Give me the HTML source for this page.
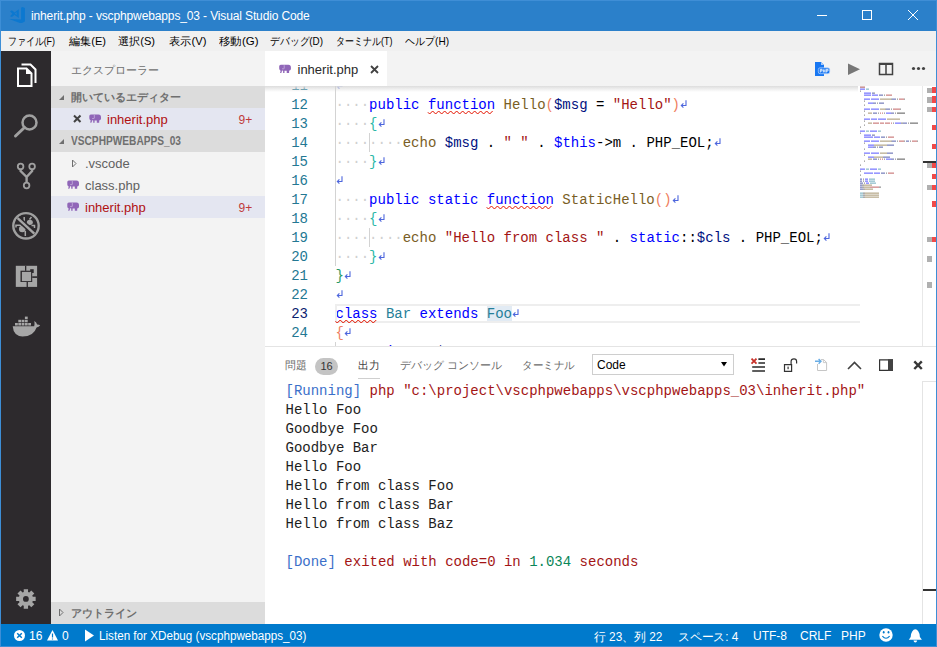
<!DOCTYPE html>
<html><head><meta charset="utf-8">
<style>
*{margin:0;padding:0;box-sizing:border-box}
html,body{width:937px;height:647px;overflow:hidden;background:#fff}
body{position:relative;font-family:"Liberation Sans",sans-serif;color:#333}
.a{position:absolute}
.nw{white-space:nowrap}
#title{left:0;top:0;width:937px;height:31px;background:#2b80ca;border-top:1px solid #3f8ed6}
#title .t{left:31px;top:8px;font-size:12px;color:#fff;letter-spacing:-0.13px;white-space:nowrap}
#menu{left:1px;top:31px;width:935px;height:20px;background:#f0f0f0}
#menu span{position:absolute;top:3px;font-size:11px;color:#000;white-space:nowrap}
#act{left:1px;top:51px;width:50px;height:573px;background:#2d2a2d}
#side{left:51px;top:51px;width:214px;height:573px;background:#f3f3f3;overflow:hidden}
#side .row{position:absolute;left:0;width:214px;height:22px;font-size:13px;color:#616161;white-space:nowrap}
#side .hdr{background:#dcdcdc;font-weight:bold;font-size:11px;color:#6f6f6f}
#side .sel{background:#e4e6f1}
#side .err{color:#b01011}
#tabs{left:265px;top:51px;width:671px;height:35px;background:#f3f3f3}
#tab{left:0;top:0;width:122px;height:35px;background:#fff}
#editor{left:265px;top:86px;width:671px;height:260px;background:#fff;overflow:hidden}
.cl{position:absolute;left:70.5px;height:19px;line-height:19px;font-family:"Liberation Mono",monospace;font-size:14px;white-space:pre;color:#000}
.ln{position:absolute;left:0;width:43px;text-align:right;height:19px;line-height:19px;font-family:"Liberation Mono",monospace;font-size:14px;color:#237893}
.ln.act{color:#0b216f}
.w{color:#d0d0d0}
.sq{color:#0000ff}
.hl{color:#267f99;background:#e2ebf4}
.eol{vertical-align:top}
#curline{left:70px;top:218px;width:525px;height:19px;border:2px solid #eeeeee;border-right:none}
#shadow{left:0;top:0;width:593px;height:6px;background:linear-gradient(#dddddd,rgba(255,255,255,0))}
#panel{left:265px;top:346px;width:671px;height:278px;background:#fff;border-top:1px solid #e4e4e4}
.pt{position:absolute;top:11px;font-size:11px;color:#6b6b6b;white-space:nowrap}
.ol{position:absolute;left:20.5px;height:19px;line-height:19px;font-family:"Liberation Mono",monospace;font-size:14px;white-space:pre}
#status{left:1px;top:624px;width:935px;height:22px;background:#007acc;color:#fff}
#status span{position:absolute;top:5px;font-size:12px;white-space:nowrap}
#bl{left:0;top:0;width:1px;height:647px;background:#3d8ed6}
#br{left:936px;top:0;width:1px;height:647px;background:#3d8ed6}
#bb{left:0;top:646px;width:937px;height:1px;background:#3d8ed6}
</style></head><body>
<div id="title" class="a"><div class="a t">inherit.php - vscphpwebapps_03 - Visual Studio Code</div></div>
<div id="menu" class="a">
<span class="f" style="left:7px;--w:47px">ファイル(F)</span>
<span class="f" style="left:67.5px;--w:37px">編集(E)</span>
<span class="f" style="left:117.3px;--w:37px">選択(S)</span>
<span class="f" style="left:167.6px;--w:37.5px">表示(V)</span>
<span class="f" style="left:218px;--w:39.5px">移動(G)</span>
<span class="f" style="left:269.2px;--w:53px">デバッグ(D)</span>
<span class="f" style="left:334.9px;--w:56.5px">ターミナル(T)</span>
<span class="f" style="left:404.2px;--w:44px">ヘルプ(H)</span>
</div>
<div id="act" class="a"></div>

<div id="side" class="a">
 <div class="a nw f" style="left:19.8px;top:12px;font-size:11px;color:#6f6f6f;--w:88px">エクスプローラー</div>
 <div class="row hdr" style="top:35px"><span class="a f" style="left:20.3px;top:4px;--w:110px">開いているエディター</span></div>
 <div class="row sel" style="top:57px"><span class="a err" style="left:56px;top:4px">inherit.php</span><span class="a err" style="left:187.5px;top:5px;font-size:12px;color:#c03a3a">9+</span></div>
 <div class="row hdr" style="top:79px"><span class="a f" style="left:20.3px;top:4px;font-size:12px;--w:110px">VSCPHPWEBAPPS_03</span></div>
 <div class="row" style="top:101px"><span class="a" style="left:34px;top:4px">.vscode</span></div>
 <div class="row" style="top:123px"><span class="a" style="left:34px;top:4px">class.php</span></div>
 <div class="row sel" style="top:145px"><span class="a err" style="left:34px;top:4px">inherit.php</span><span class="a err" style="left:187.5px;top:5px;font-size:12px;color:#c03a3a">9+</span></div>
 <div class="row hdr" style="top:551px"><span class="a f" style="left:19.5px;top:4px;--w:66px">アウトライン</span></div>
</div>

<div id="tabs" class="a">
 <div id="tab" class="a"><span class="a nw" style="left:32.5px;top:11px;font-size:13px;color:#2a2a2a">inherit.php</span></div>
</div>

<div id="editor" class="a">
<div class="cl" style="top:-9px"><svg class="eol" width="8.4" height="19" viewBox="0 0 8.4 19"><path d="M6 4.3V9.5H1.3M3.4 7.4L1.3 9.5L3.4 11.6" fill="none" stroke="#4d66dd" stroke-width="1.1"/></svg></div>
<div class="ln" style="top:-9px">11</div>
<div class="cl" style="top:10px"><span class="w">····</span><span style="color:#0000ff">public </span><span class="sq">function</span><span style="color:#0000ff"> </span><span style="color:#795e26">Hello</span><span style="color:#ef7f5f">(</span><span style="color:#001080">$msg</span><span style="color:#000000"> = </span><span style="color:#a31515">"Hello"</span><span style="color:#ef7f5f">)</span><svg class="eol" width="8.4" height="19" viewBox="0 0 8.4 19"><path d="M6 4.3V9.5H1.3M3.4 7.4L1.3 9.5L3.4 11.6" fill="none" stroke="#4d66dd" stroke-width="1.1"/></svg></div>
<div class="ln" style="top:10px">12</div>
<div class="cl" style="top:29px"><span class="w">····</span><span style="color:#2cb8a8">{</span><svg class="eol" width="8.4" height="19" viewBox="0 0 8.4 19"><path d="M6 4.3V9.5H1.3M3.4 7.4L1.3 9.5L3.4 11.6" fill="none" stroke="#4d66dd" stroke-width="1.1"/></svg></div>
<div class="ln" style="top:29px">13</div>
<div class="cl" style="top:48px"><span class="w">········</span><span style="color:#795e26">echo </span><span style="color:#001080">$msg</span><span style="color:#000000"> . </span><span style="color:#a31515">" "</span><span style="color:#000000"> . </span><span style="color:#0000ff">$this</span><span style="color:#000000">-&gt;m . PHP_EOL;</span><svg class="eol" width="8.4" height="19" viewBox="0 0 8.4 19"><path d="M6 4.3V9.5H1.3M3.4 7.4L1.3 9.5L3.4 11.6" fill="none" stroke="#4d66dd" stroke-width="1.1"/></svg></div>
<div class="ln" style="top:48px">14</div>
<div class="cl" style="top:67px"><span class="w">····</span><span style="color:#2cb8a8">}</span><svg class="eol" width="8.4" height="19" viewBox="0 0 8.4 19"><path d="M6 4.3V9.5H1.3M3.4 7.4L1.3 9.5L3.4 11.6" fill="none" stroke="#4d66dd" stroke-width="1.1"/></svg></div>
<div class="ln" style="top:67px">15</div>
<div class="cl" style="top:86px"><svg class="eol" width="8.4" height="19" viewBox="0 0 8.4 19"><path d="M6 4.3V9.5H1.3M3.4 7.4L1.3 9.5L3.4 11.6" fill="none" stroke="#4d66dd" stroke-width="1.1"/></svg></div>
<div class="ln" style="top:86px">16</div>
<div class="cl" style="top:105px"><span class="w">····</span><span style="color:#0000ff">public static </span><span class="sq">function</span><span style="color:#0000ff"> </span><span style="color:#795e26">StaticHello</span><span style="color:#ef7f5f">()</span><svg class="eol" width="8.4" height="19" viewBox="0 0 8.4 19"><path d="M6 4.3V9.5H1.3M3.4 7.4L1.3 9.5L3.4 11.6" fill="none" stroke="#4d66dd" stroke-width="1.1"/></svg></div>
<div class="ln" style="top:105px">17</div>
<div class="cl" style="top:124px"><span class="w">····</span><span style="color:#2cb8a8">{</span><svg class="eol" width="8.4" height="19" viewBox="0 0 8.4 19"><path d="M6 4.3V9.5H1.3M3.4 7.4L1.3 9.5L3.4 11.6" fill="none" stroke="#4d66dd" stroke-width="1.1"/></svg></div>
<div class="ln" style="top:124px">18</div>
<div class="cl" style="top:143px"><span class="w">········</span><span style="color:#795e26">echo </span><span style="color:#a31515">"Hello from class "</span><span style="color:#000000"> . </span><span style="color:#0000ff">static</span><span style="color:#000000">::</span><span style="color:#001080">$cls</span><span style="color:#000000"> . PHP_EOL;</span><svg class="eol" width="8.4" height="19" viewBox="0 0 8.4 19"><path d="M6 4.3V9.5H1.3M3.4 7.4L1.3 9.5L3.4 11.6" fill="none" stroke="#4d66dd" stroke-width="1.1"/></svg></div>
<div class="ln" style="top:143px">19</div>
<div class="cl" style="top:162px"><span class="w">····</span><span style="color:#2cb8a8">}</span><svg class="eol" width="8.4" height="19" viewBox="0 0 8.4 19"><path d="M6 4.3V9.5H1.3M3.4 7.4L1.3 9.5L3.4 11.6" fill="none" stroke="#4d66dd" stroke-width="1.1"/></svg></div>
<div class="ln" style="top:162px">20</div>
<div class="cl" style="top:181px"><span style="color:#2a9a66">}</span><svg class="eol" width="8.4" height="19" viewBox="0 0 8.4 19"><path d="M6 4.3V9.5H1.3M3.4 7.4L1.3 9.5L3.4 11.6" fill="none" stroke="#4d66dd" stroke-width="1.1"/></svg></div>
<div class="ln" style="top:181px">21</div>
<div class="cl" style="top:200px"><svg class="eol" width="8.4" height="19" viewBox="0 0 8.4 19"><path d="M6 4.3V9.5H1.3M3.4 7.4L1.3 9.5L3.4 11.6" fill="none" stroke="#4d66dd" stroke-width="1.1"/></svg></div>
<div class="ln" style="top:200px">22</div>
<div class="cl" style="top:219px"><span class="sq">class</span><span style="color:#0000ff"> </span><span style="color:#267f99">Bar </span><span style="color:#0000ff">extends </span><span class="hl">Foo</span><svg class="eol" width="8.4" height="19" viewBox="0 0 8.4 19"><path d="M6 4.3V9.5H1.3M3.4 7.4L1.3 9.5L3.4 11.6" fill="none" stroke="#4d66dd" stroke-width="1.1"/></svg></div>
<div class="ln act" style="top:219px">23</div>
<div class="cl" style="top:238px"><span style="color:#ef7f5f">{</span><svg class="eol" width="8.4" height="19" viewBox="0 0 8.4 19"><path d="M6 4.3V9.5H1.3M3.4 7.4L1.3 9.5L3.4 11.6" fill="none" stroke="#4d66dd" stroke-width="1.1"/></svg></div>
<div class="ln" style="top:238px">24</div>
<div class="cl" style="top:257px"><span class="w">····</span><span style="color:#0000ff">private </span><span style="color:#001080">$m</span><span style="color:#000000">;</span></div>
<div class="ln" style="top:257px">25</div>
<div id="curline" class="a"></div>
<div id="shadow" class="a"></div>
</div>

<div id="panel" class="a">
 <span class="pt f" style="left:20.2px;--w:21.6px">問題</span>
 <div class="a" style="left:50px;top:11px;width:23px;height:17px;border-radius:9px;background:#c4c4c4;font-size:11px;color:#333;text-align:center;line-height:17px">16</div>
 <span class="pt f" style="left:93px;color:#424242;--w:21.6px">出力</span>
 <div class="a" style="left:93px;top:31px;width:22px;height:1px;background:#cfcfcf"></div>
 <span class="pt f" style="left:135.2px;--w:102px">デバッグ コンソール</span>
 <span class="pt f" style="left:257.3px;--w:52.7px">ターミナル</span>
 <div class="a" style="left:327px;top:7px;width:142px;height:21px;border:1px solid #cecece;background:#fff"><span class="a nw" style="left:4px;top:3px;font-size:12px;color:#000">Code</span></div>
<div class="ol" style="top:35px"><span style="color:#3b6fc9">[Running]</span><span style="color:#a31515"> php "c:\project\vscphpwebapps\vscphpwebapps_03\inherit.php"</span></div>
<div class="ol" style="top:54px"><span style="color:#1e1e1e">Hello Foo</span></div>
<div class="ol" style="top:73px"><span style="color:#1e1e1e">Goodbye Foo</span></div>
<div class="ol" style="top:92px"><span style="color:#1e1e1e">Goodbye Bar</span></div>
<div class="ol" style="top:111px"><span style="color:#1e1e1e">Hello Foo</span></div>
<div class="ol" style="top:130px"><span style="color:#1e1e1e">Hello from class Foo</span></div>
<div class="ol" style="top:149px"><span style="color:#1e1e1e">Hello from class Bar</span></div>
<div class="ol" style="top:168px"><span style="color:#1e1e1e">Hello from class Baz</span></div>
<div class="ol" style="top:187px"></div>
<div class="ol" style="top:206px"><span style="color:#3b6fc9">[Done]</span><span style="color:#a31515"> exited with code=0 in </span><span style="color:#098658">1.034</span><span style="color:#a31515"> seconds</span></div>
</div>

<div id="status" class="a">
 <span style="left:28px">16</span>
 <span style="left:61px">0</span>
 <span class="f" style="left:97.6px;--w:207.4px">Listen for XDebug (vscphpwebapps_03)</span>
 <span class="f" style="left:593.2px;--w:68.4px">行 23、列 22</span>
 <span class="f" style="left:676.5px;--w:60.4px">スペース: 4</span>
 <span style="left:752px">UTF-8</span>
 <span style="left:799px">CRLF</span>
 <span style="left:840px">PHP</span>
</div>

<svg class="a" style="left:0;top:0" width="937" height="647" viewBox="0 0 937 647">
 <!-- title logo -->
 <g fill="#0c78d0">
  <path d="M21.1 7.4L22.6 7L24.9 8.1V21.6L22 22.9H21.1Z"/>
  <path d="M10 11.2L11.9 10.3L14.6 12.6L18.8 9.3V17.9L14.6 14.9L11.9 17.1L10 16.2L12.3 13.7Z M16.6 12V15.2L14.9 13.6Z" fill-rule="evenodd"/>
  <path d="M9.1 19.1L21.5 19.6V22.9L19.8 22.9Z"/>
 </g>
 <!-- window controls -->
 <path d="M817 15.5H827" stroke="#fff" stroke-width="1"/>
 <rect x="862.5" y="10.5" width="9" height="9" fill="none" stroke="#fff" stroke-width="1"/>
 <path d="M908 10L918 20M918 10L908 20" stroke="#fff" stroke-width="1"/>
 <!-- activity bar icons -->
 <g fill="none" stroke="#fff" stroke-width="2">
  <path d="M18 68.5H26.5L31.5 73.5V86H18Z"/>
  <path d="M21.5 64.5H30.5L35.5 69.5V83"/>
 </g>
 <path d="M26 68L32 74H26Z" fill="#fff"/>
 <g fill="none" stroke="#a0a0a0">
  <circle cx="29.5" cy="122.5" r="7" stroke-width="2.5"/>
  <path d="M24.5 127.5L15.5 136" stroke-width="3" stroke-linecap="round"/>
  <circle cx="20.6" cy="166.4" r="2.8" stroke-width="1.8"/>
  <circle cx="32.1" cy="166.4" r="2.8" stroke-width="1.8"/>
  <circle cx="26.6" cy="185.5" r="2.8" stroke-width="1.8"/>
  <path d="M20.6 169.2V171L26.6 177V182.7M32.1 169.2V171L26.6 177" stroke-width="2.4"/>
  <circle cx="26" cy="225.8" r="12.7" stroke-width="2.4"/>
 </g>
 <g fill="#a6a6a6">
  <ellipse cx="22.3" cy="229" rx="3.3" ry="3.3"/>
  <ellipse cx="29.8" cy="222.3" rx="3" ry="2.6"/>
 </g>
 <path d="M16 227.5V225.3H21.5M25.3 231V236M24.2 217V222M34.5 228V225.5H31.5M29.5 219.5L31.5 217" stroke="#a6a6a6" stroke-width="1.5" fill="none"/>
 <path d="M17.6 218.2L34.3 233.6" stroke="#2d2a2d" stroke-width="5.5"/>
 <path d="M17.6 218.2L34.3 233.6" stroke="#a6a6a6" stroke-width="2.4"/>
 <rect x="15.8" y="265.8" width="21.3" height="21.1" fill="#a6a6a6"/>
 <g fill="#2d2a2d">
  <rect x="20.5" y="270.7" width="11.7" height="11.3"/>
  <rect x="25" y="265.8" width="1.3" height="5"/>
  <rect x="26.6" y="282" width="1.3" height="5"/>
  <rect x="32.2" y="276.3" width="5" height="1.6"/>
  <rect x="30.2" y="269.2" width="3.5" height="3.8"/>
 </g>
 <rect x="21.9" y="271.9" width="9.2" height="9.2" fill="#a6a6a6"/>
 <path d="M12.7 326.3H34.2Q34.8 323.5 34.3 321Q36.6 322.3 37.1 324.4Q39 324.3 40.2 325.3Q38.8 327 36.6 327.4Q33.5 336.5 22.5 336.6Q13.5 336 12.7 326.3Z" fill="#a6a6a6"/>
 <g fill="#a6a6a6">
  <rect x="15" y="323" width="2.8" height="2.5"/><rect x="18.3" y="323" width="2.8" height="2.5"/><rect x="21.6" y="323" width="2.8" height="2.5"/><rect x="24.9" y="323" width="2.8" height="2.5"/><rect x="28.2" y="323" width="2.8" height="2.5"/>
  <rect x="18.3" y="319.8" width="2.8" height="2.5"/><rect x="21.6" y="319.8" width="2.8" height="2.5"/><rect x="24.9" y="319.8" width="2.8" height="2.5"/>
  <rect x="24.9" y="316.6" width="2.8" height="2.5"/>
 </g>
 <path d="M23.77 592.02 L23.72 589.14 L28.08 589.14 L28.03 592.02 L29.26 592.53 L31.26 590.46 L34.34 593.54 L32.27 595.54 L32.78 596.77 L35.66 596.72 L35.66 601.08 L32.78 601.03 L32.27 602.26 L34.34 604.26 L31.26 607.34 L29.26 605.27 L28.03 605.78 L28.08 608.66 L23.72 608.66 L23.77 605.78 L22.54 605.27 L20.54 607.34 L17.46 604.26 L19.53 602.26 L19.02 601.03 L16.14 601.08 L16.14 596.72 L19.02 596.77 L19.53 595.54 L17.46 593.54 L20.54 590.46 L22.54 592.53 Z M25.9 596 A2.9 2.9 0 1 0 25.9 601.8 A2.9 2.9 0 1 0 25.9 596Z" fill="#a6a6a6" fill-rule="evenodd"/>
 <!-- sidebar triangles -->
 <path d="M64 95V100H59Z" fill="#6f6f6f"/>
 <path d="M64 139V144H59Z" fill="#6f6f6f"/>
 <path d="M72.5 160V167L76 163.5Z" fill="none" stroke="#6f6f6f" stroke-width="1"/>
 <path d="M59.5 609V616L63 612.5Z" fill="none" stroke="#6f6f6f" stroke-width="1"/>
 <path d="M74 115.5L80.5 122M80.5 115.5L74 122" stroke="#424242" stroke-width="2"/>
 <!-- elephants -->
 <defs><g id="el"><path d="M0.3 1.5Q0.3 0 1.8 0H9.5Q12 0 12 2.8V4.2Q12 5.6 10.2 5.9V8.2H7.8V5.9H5.6V8.2H4.2V5.9Q3.4 5.4 2.9 5.9V7Q2.9 8.2 1.6 8.2L1 7.6Q1.7 7.2 1.7 6Q0.3 5.2 0.3 3.8Z" fill="#9066b8"/><path d="M5.3 0.4V3.6Q5.3 4 4.9 4H3.2" fill="none" stroke="#c7b2de" stroke-width="0.8"/></g></defs>
 <use href="#el" x="89" y="114.5"/>
 <use href="#el" x="67" y="180.6"/>
 <use href="#el" x="67" y="202.6"/>
 <use href="#el" x="278.9" y="64.8"/>
 <!-- tab close -->
 <path d="M371 66L378 73M378 66L371 73" stroke="#424242" stroke-width="1.8"/>
 <!-- editor actions -->
 <path d="M815 62H821L824 65V76H815Z" fill="#1877f2"/>
 <path d="M821 62V65H824Z" fill="#a9c9f7"/>
 <rect x="818.3" y="67.8" width="11.4" height="5.9" rx="1.8" fill="#1877f2" stroke="#bcd6fa" stroke-width="0.7"/>
 <path d="M820.3 72.5V69.3H822V71H820.3M823.3 72.5V69.3M823.3 71H825M825 69.3V72.5M826.3 72.5V69.3H828V71H826.3" fill="none" stroke="#fff" stroke-width="0.8"/>
 <path d="M848 63.5V75L860 69.2Z" fill="#777"/>
 <path d="M879.5 63.5H892.5V74.5H879.5ZM886 63.5V74.5" fill="none" stroke="#424242" stroke-width="1.5"/>
 <path d="M879 63H893V65H879Z" fill="#424242"/>
 <circle cx="913.5" cy="68.5" r="1.6" fill="#424242"/><circle cx="918.5" cy="68.5" r="1.6" fill="#424242"/><circle cx="923.5" cy="68.5" r="1.6" fill="#424242"/>
 <path d="M427.90 112.25 L429.65 114.00 L432.65 111.00 L435.65 114.00 L438.65 111.00 L441.65 114.00 L444.65 111.00 L447.65 114.00 L450.65 111.00 L453.65 114.00 L456.65 111.00 L459.65 114.00 L462.65 111.00 L465.65 114.00 L468.65 111.00 L471.65 114.00 L474.65 111.00 L477.65 114.00 L480.65 111.00 L483.65 114.00 L486.65 111.00 L489.65 114.00 L492.65 111.00" fill="none" stroke="#e51400" stroke-width="1"/><path d="M486.70 207.25 L488.45 209.00 L491.45 206.00 L494.45 209.00 L497.45 206.00 L500.45 209.00 L503.45 206.00 L506.45 209.00 L509.45 206.00 L512.45 209.00 L515.45 206.00 L518.45 209.00 L521.45 206.00 L524.45 209.00 L527.45 206.00 L530.45 209.00 L533.45 206.00 L536.45 209.00 L539.45 206.00 L542.45 209.00 L545.45 206.00 L548.45 209.00 L551.45 206.00" fill="none" stroke="#e51400" stroke-width="1"/><path d="M335.50 321.25 L337.25 323.00 L340.25 320.00 L343.25 323.00 L346.25 320.00 L349.25 323.00 L352.25 320.00 L355.25 323.00 L358.25 320.00 L361.25 323.00 L364.25 320.00 L367.25 323.00 L370.25 320.00 L373.25 323.00 L376.25 320.00" fill="none" stroke="#e51400" stroke-width="1"/>
 <!-- indent guides -->
 <path d="M335.5 86V266M369.5 133V152M369.5 228V247M335.5 342V346" stroke="#d3d3d3" stroke-width="1"/>
 <!-- minimap -->
 <g opacity="0.5"><rect x="860" y="86.5" width="5" height="1.3" fill="#800000"/><rect x="860" y="88.5" width="5" height="1.3" fill="#0000ff"/><rect x="866" y="88.5" width="3" height="1.3" fill="#267f99"/><rect x="860" y="90.5" width="1" height="1.3" fill="#333"/><rect x="864" y="92.5" width="7" height="1.3" fill="#0000ff"/><rect x="872" y="92.5" width="2" height="1.3" fill="#001080"/><rect x="874" y="92.5" width="1" height="1.3" fill="#333"/><rect x="864" y="94.5" width="7" height="1.3" fill="#0000ff"/><rect x="872" y="94.5" width="6" height="1.3" fill="#0000ff"/><rect x="879" y="94.5" width="4" height="1.3" fill="#001080"/><rect x="884" y="94.5" width="1" height="1.3" fill="#333"/><rect x="886" y="94.5" width="6" height="1.3" fill="#a31515"/><rect x="864" y="98.5" width="6" height="1.3" fill="#0000ff"/><rect x="871" y="98.5" width="8" height="1.3" fill="#0000ff"/><rect x="880" y="98.5" width="11" height="1.3" fill="#795e26"/><rect x="891" y="98.5" width="1" height="1.3" fill="#333"/><rect x="892" y="98.5" width="4" height="1.3" fill="#001080"/><rect x="897" y="98.5" width="1" height="1.3" fill="#333"/><rect x="899" y="98.5" width="5" height="1.3" fill="#a31515"/><rect x="904" y="98.5" width="1" height="1.3" fill="#333"/><rect x="864" y="100.5" width="1" height="1.3" fill="#333"/><rect x="868" y="102.5" width="5" height="1.3" fill="#0000ff"/><rect x="873" y="102.5" width="3" height="1.3" fill="#001080"/><rect x="877" y="102.5" width="1" height="1.3" fill="#333"/><rect x="879" y="102.5" width="5" height="1.3" fill="#001080"/><rect x="864" y="104.5" width="1" height="1.3" fill="#333"/><rect x="864" y="108.5" width="6" height="1.3" fill="#0000ff"/><rect x="871" y="108.5" width="8" height="1.3" fill="#0000ff"/><rect x="880" y="108.5" width="5" height="1.3" fill="#795e26"/><rect x="885" y="108.5" width="1" height="1.3" fill="#333"/><rect x="886" y="108.5" width="4" height="1.3" fill="#001080"/><rect x="891" y="108.5" width="1" height="1.3" fill="#333"/><rect x="893" y="108.5" width="7" height="1.3" fill="#a31515"/><rect x="900" y="108.5" width="1" height="1.3" fill="#333"/><rect x="864" y="110.5" width="1" height="1.3" fill="#333"/><rect x="868" y="112.5" width="4" height="1.3" fill="#795e26"/><rect x="873" y="112.5" width="4" height="1.3" fill="#001080"/><rect x="878" y="112.5" width="1" height="1.3" fill="#333"/><rect x="880" y="112.5" width="1" height="1.3" fill="#a31515"/><rect x="882" y="112.5" width="1" height="1.3" fill="#a31515"/><rect x="884" y="112.5" width="1" height="1.3" fill="#333"/><rect x="886" y="112.5" width="5" height="1.3" fill="#0000ff"/><rect x="891" y="112.5" width="3" height="1.3" fill="#001080"/><rect x="895" y="112.5" width="1" height="1.3" fill="#333"/><rect x="897" y="112.5" width="8" height="1.3" fill="#000"/><rect x="864" y="114.5" width="1" height="1.3" fill="#333"/><rect x="864" y="118.5" width="6" height="1.3" fill="#0000ff"/><rect x="871" y="118.5" width="6" height="1.3" fill="#0000ff"/><rect x="878" y="118.5" width="8" height="1.3" fill="#0000ff"/><rect x="887" y="118.5" width="13" height="1.3" fill="#795e26"/><rect x="864" y="120.5" width="1" height="1.3" fill="#333"/><rect x="868" y="122.5" width="4" height="1.3" fill="#795e26"/><rect x="873" y="122.5" width="6" height="1.3" fill="#a31515"/><rect x="880" y="122.5" width="4" height="1.3" fill="#a31515"/><rect x="885" y="122.5" width="5" height="1.3" fill="#a31515"/><rect x="891" y="122.5" width="1" height="1.3" fill="#a31515"/><rect x="893" y="122.5" width="1" height="1.3" fill="#333"/><rect x="895" y="122.5" width="6" height="1.3" fill="#0000ff"/><rect x="901" y="122.5" width="2" height="1.3" fill="#333"/><rect x="903" y="122.5" width="4" height="1.3" fill="#001080"/><rect x="908" y="122.5" width="1" height="1.3" fill="#333"/><rect x="910" y="122.5" width="8" height="1.3" fill="#000"/><rect x="864" y="124.5" width="1" height="1.3" fill="#333"/><rect x="860" y="126.5" width="1" height="1.3" fill="#333"/><rect x="860" y="130.5" width="5" height="1.3" fill="#0000ff"/><rect x="866" y="130.5" width="3" height="1.3" fill="#267f99"/><rect x="870" y="130.5" width="7" height="1.3" fill="#0000ff"/><rect x="878" y="130.5" width="3" height="1.3" fill="#267f99"/><rect x="860" y="132.5" width="1" height="1.3" fill="#333"/><rect x="864" y="134.5" width="7" height="1.3" fill="#0000ff"/><rect x="872" y="134.5" width="2" height="1.3" fill="#001080"/><rect x="874" y="134.5" width="1" height="1.3" fill="#333"/><rect x="864" y="136.5" width="9" height="1.3" fill="#0000ff"/><rect x="874" y="136.5" width="6" height="1.3" fill="#0000ff"/><rect x="881" y="136.5" width="4" height="1.3" fill="#001080"/><rect x="886" y="136.5" width="1" height="1.3" fill="#333"/><rect x="888" y="136.5" width="6" height="1.3" fill="#a31515"/><rect x="864" y="140.5" width="6" height="1.3" fill="#0000ff"/><rect x="871" y="140.5" width="8" height="1.3" fill="#0000ff"/><rect x="880" y="140.5" width="11" height="1.3" fill="#795e26"/><rect x="891" y="140.5" width="1" height="1.3" fill="#333"/><rect x="892" y="140.5" width="4" height="1.3" fill="#001080"/><rect x="897" y="140.5" width="1" height="1.3" fill="#333"/><rect x="899" y="140.5" width="5" height="1.3" fill="#a31515"/><rect x="904" y="140.5" width="1" height="1.3" fill="#333"/><rect x="906" y="140.5" width="3" height="1.3" fill="#001080"/><rect x="910" y="140.5" width="1" height="1.3" fill="#333"/><rect x="912" y="140.5" width="5" height="1.3" fill="#a31515"/><rect x="917" y="140.5" width="1" height="1.3" fill="#333"/><rect x="864" y="142.5" width="1" height="1.3" fill="#333"/><rect x="868" y="144.5" width="6" height="1.3" fill="#0000ff"/><rect x="874" y="144.5" width="13" height="1.3" fill="#795e26"/><rect x="887" y="144.5" width="7" height="1.3" fill="#001080"/><rect x="868" y="146.5" width="5" height="1.3" fill="#0000ff"/><rect x="873" y="146.5" width="3" height="1.3" fill="#001080"/><rect x="877" y="146.5" width="1" height="1.3" fill="#333"/><rect x="879" y="146.5" width="4" height="1.3" fill="#001080"/><rect x="864" y="148.5" width="1" height="1.3" fill="#333"/><rect x="864" y="152.5" width="6" height="1.3" fill="#0000ff"/><rect x="871" y="152.5" width="8" height="1.3" fill="#0000ff"/><rect x="880" y="152.5" width="7" height="1.3" fill="#795e26"/><rect x="887" y="152.5" width="6" height="1.3" fill="#001080"/><rect x="864" y="154.5" width="1" height="1.3" fill="#333"/><rect x="868" y="156.5" width="6" height="1.3" fill="#0000ff"/><rect x="874" y="156.5" width="9" height="1.3" fill="#795e26"/><rect x="883" y="156.5" width="7" height="1.3" fill="#001080"/><rect x="868" y="158.5" width="4" height="1.3" fill="#795e26"/><rect x="873" y="158.5" width="4" height="1.3" fill="#001080"/><rect x="878" y="158.5" width="1" height="1.3" fill="#333"/><rect x="880" y="158.5" width="1" height="1.3" fill="#a31515"/><rect x="882" y="158.5" width="1" height="1.3" fill="#a31515"/><rect x="884" y="158.5" width="1" height="1.3" fill="#333"/><rect x="886" y="158.5" width="5" height="1.3" fill="#0000ff"/><rect x="891" y="158.5" width="3" height="1.3" fill="#001080"/><rect x="895" y="158.5" width="1" height="1.3" fill="#333"/><rect x="897" y="158.5" width="8" height="1.3" fill="#000"/><rect x="864" y="160.5" width="1" height="1.3" fill="#333"/><rect x="860" y="164.5" width="1" height="1.3" fill="#333"/><rect x="860" y="168.5" width="5" height="1.3" fill="#0000ff"/><rect x="866" y="168.5" width="3" height="1.3" fill="#267f99"/><rect x="870" y="168.5" width="7" height="1.3" fill="#0000ff"/><rect x="878" y="168.5" width="3" height="1.3" fill="#267f99"/><rect x="860" y="170.5" width="1" height="1.3" fill="#333"/><rect x="864" y="172.5" width="9" height="1.3" fill="#0000ff"/><rect x="874" y="172.5" width="6" height="1.3" fill="#0000ff"/><rect x="881" y="172.5" width="4" height="1.3" fill="#001080"/><rect x="886" y="172.5" width="1" height="1.3" fill="#333"/><rect x="888" y="172.5" width="6" height="1.3" fill="#a31515"/><rect x="860" y="174.5" width="1" height="1.3" fill="#333"/><rect x="860" y="178.5" width="2" height="1.3" fill="#001080"/><rect x="863" y="178.5" width="1" height="1.3" fill="#333"/><rect x="865" y="178.5" width="3" height="1.3" fill="#0000ff"/><rect x="869" y="178.5" width="6" height="1.3" fill="#267f99"/><rect x="860" y="180.5" width="2" height="1.3" fill="#001080"/><rect x="863" y="180.5" width="1" height="1.3" fill="#333"/><rect x="865" y="180.5" width="3" height="1.3" fill="#0000ff"/><rect x="869" y="180.5" width="6" height="1.3" fill="#267f99"/><rect x="860" y="182.5" width="3" height="1.3" fill="#001080"/><rect x="864" y="182.5" width="1" height="1.3" fill="#333"/><rect x="866" y="182.5" width="3" height="1.3" fill="#0000ff"/><rect x="870" y="182.5" width="6" height="1.3" fill="#267f99"/><rect x="860" y="184.5" width="2" height="1.3" fill="#001080"/><rect x="862" y="184.5" width="2" height="1.3" fill="#333"/><rect x="864" y="184.5" width="8" height="1.3" fill="#795e26"/><rect x="860" y="186.5" width="2" height="1.3" fill="#001080"/><rect x="862" y="186.5" width="2" height="1.3" fill="#333"/><rect x="864" y="186.5" width="6" height="1.3" fill="#795e26"/><rect x="870" y="186.5" width="9" height="1.3" fill="#a31515"/><rect x="879" y="186.5" width="2" height="1.3" fill="#333"/><rect x="860" y="188.5" width="3" height="1.3" fill="#001080"/><rect x="863" y="188.5" width="2" height="1.3" fill="#333"/><rect x="865" y="188.5" width="8" height="1.3" fill="#795e26"/><rect x="860" y="192.5" width="3" height="1.3" fill="#267f99"/><rect x="863" y="192.5" width="2" height="1.3" fill="#333"/><rect x="865" y="192.5" width="14" height="1.3" fill="#795e26"/><rect x="860" y="194.5" width="3" height="1.3" fill="#267f99"/><rect x="863" y="194.5" width="2" height="1.3" fill="#333"/><rect x="865" y="194.5" width="14" height="1.3" fill="#795e26"/><rect x="860" y="196.5" width="3" height="1.3" fill="#267f99"/><rect x="863" y="196.5" width="2" height="1.3" fill="#333"/><rect x="865" y="196.5" width="14" height="1.3" fill="#795e26"/></g>
 <!-- scrollbar -->
 <path d="M922.5 86V346" stroke="#e8e8e8"/>
 <g fill="#b0b0b0">
  <rect x="927" y="88" width="5" height="5"/><rect x="927" y="97" width="5" height="6"/><rect x="927" y="107" width="5" height="5"/>
  <rect x="927" y="163" width="5" height="5"/><rect x="927" y="185" width="5" height="5"/><rect x="927" y="237" width="5" height="5"/>
  <rect x="927" y="256" width="5" height="6"/><rect x="927" y="282" width="5" height="6"/>
 </g>
 <g fill="#f04a4a">
  <rect x="932" y="87" width="4" height="6"/><rect x="932" y="96" width="4" height="7"/><rect x="932" y="107" width="4" height="5"/>
  <rect x="932" y="125" width="4" height="5"/><rect x="932" y="144" width="4" height="5"/><rect x="932" y="163" width="4" height="5"/>
  <rect x="932" y="174" width="4" height="5"/><rect x="932" y="185" width="4" height="5"/><rect x="932" y="201" width="4" height="6"/>
  <rect x="932" y="237" width="4" height="5"/>
 </g>
 <rect x="923" y="161" width="13" height="2" fill="#333"/>
 <!-- panel scrollbar -->
 <path d="M922.5 381V624M922 381.5H936" stroke="#e4e4e4"/>
 <rect x="923" y="589" width="13" height="2" fill="#333"/>
 <!-- panel icons -->
 <path d="M758.4 359.1H765M758.4 363H765M752.2 367H765M752.2 371H765" stroke="#2a2a2a" stroke-width="1.7"/>
 <path d="M751.5 358.7L756.5 363.6M756.5 358.7L751.5 363.6" stroke="#c8322a" stroke-width="1.8"/>
 <path d="M784.5 364.6H791.6V371.4H784.5Z" fill="none" stroke="#333" stroke-width="1.2"/>
 <path d="M791.1 364.5V361.3Q791.1 358.9 794 358.9Q796.6 358.9 796.6 361.3V363.6" fill="none" stroke="#333" stroke-width="1.2"/>
 <rect x="787.4" y="366.6" width="1.4" height="2.6" fill="#555"/>
 <path d="M817.5 364V370.5H826.6V362.5L823.6 359.6H821" fill="none" stroke="#c6c6c6" stroke-width="1"/>
 <path d="M823.4 359.6V362.6H826.6" fill="none" stroke="#c6c6c6" stroke-width="0.9"/>
 <path d="M815 361.3H821M818.6 358.9L821 361.3L818.6 363.7" fill="none" stroke="#6aaee6" stroke-width="1.4"/>
 <path d="M848 369L854.5 362.5L861 369" fill="none" stroke="#424242" stroke-width="1.6"/>
 <path d="M879.6 359.8H892.4V370.3H879.6Z" fill="none" stroke="#333" stroke-width="1.2"/>
 <rect x="888" y="359.3" width="5" height="11.4" fill="#424242"/>
 <path d="M914.3 361.4L921.8 369M921.8 361.4L914.3 369" stroke="#383838" stroke-width="2.4"/>
 <path d="M721 362H727L724 366.5Z" fill="#000"/>
 <!-- status bar icons -->
 <circle cx="19.5" cy="635.5" r="5.5" fill="#fff"/>
 <path d="M17.2 633.2L21.8 637.8M21.8 633.2L17.2 637.8" stroke="#007acc" stroke-width="1.5"/>
 <path d="M52.5 630L58 640.5H47Z" fill="#fff"/>
 <path d="M52.5 633.5V637.5M52.5 638.5V639.5" stroke="#007acc" stroke-width="1.2"/>
 <path d="M85 629.5V641.5L94 635.5Z" fill="#fff"/>
 <circle cx="886" cy="635" r="6.7" fill="#fff"/>
 <ellipse cx="883.7" cy="632.3" rx="0.9" ry="1.2" fill="#007acc"/><ellipse cx="888.5" cy="632.3" rx="0.9" ry="1.2" fill="#007acc"/>
 <path d="M882.4 636.2Q886 640.3 889.6 636.2" fill="none" stroke="#007acc" stroke-width="1.2"/>
 <path d="M915.3 629.3Q917 629.3 918.4 631.5Q919.8 633.5 919.9 637L921.9 639.8H908.8L910.7 637Q910.8 633.5 912.2 631.5Q913.6 629.3 915.3 629.3Z" fill="#fff"/>
 <path d="M913.5 640.6H917.2Q916.8 642.6 915.3 642.6Q913.9 642.6 913.5 640.6Z" fill="#fff"/>
</svg>

<div id="status" class="a" style="display:none"></div>
<div id="bl" class="a"></div><div id="br" class="a"></div><div id="bb" class="a"></div>
<script>
(function(){function fit(){var els=document.querySelectorAll('.f');for(var i=0;i<els.length;i++){var e=els[i];e.style.transform='none';var w=parseFloat(getComputedStyle(e).getPropertyValue('--w'));var r=e.getBoundingClientRect().width;if(w&&r){e.style.transformOrigin='0 0';e.style.transform='scaleX('+(w/r)+')';}}}
fit();window.addEventListener('load',fit);if(document.fonts&&document.fonts.ready){document.fonts.ready.then(fit);}})();
</script>
</body></html>
